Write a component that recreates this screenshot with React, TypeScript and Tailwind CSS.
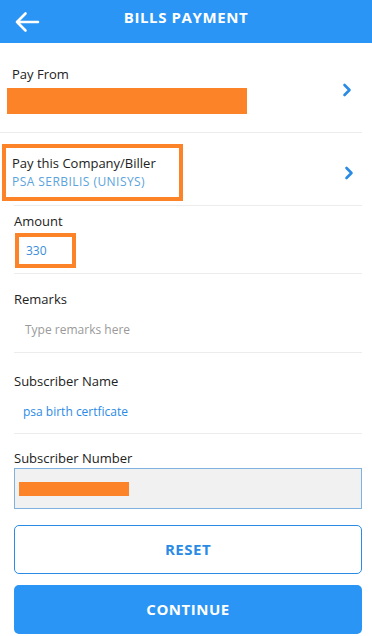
import React from "react";

const font = { fontFamily: '"Open Sans", "Liberation Sans", sans-serif' };

function Chevron() {
  return (
    <svg width="10" height="14" viewBox="0 0 10 14" className="shrink-0">
      <path d="M2.5 2 L7.5 7 L2.5 12" fill="none" stroke="#2a8be6" strokeWidth="2.6" strokeLinecap="round" strokeLinejoin="round" />
    </svg>
  );
}

export default function App() {
  return (
    <div className="w-[372px] h-[636px] bg-white overflow-hidden flex flex-col" style={font}>
      <div className="h-[43px] shrink-0 bg-[#2a95f5] flex items-center px-[14px] relative">
        <svg width="26" height="22" viewBox="0 0 26 22">
          <path d="M24 11 H3 M11.5 2.5 L3 11 L11.5 19.5" fill="none" stroke="#fff" strokeWidth="2.6" strokeLinecap="round" strokeLinejoin="round" />
        </svg>
        <div className="absolute left-0 right-0 top-0 h-[35px] flex items-center justify-center text-white font-bold text-[15px] tracking-[0.6px] pointer-events-none">BILLS PAYMENT</div>
      </div>

      <div className="flex items-center pl-[7px] pr-[18px] pt-[22px] pb-[18px] border-b border-[#ececec] mr-[10px]">
        <div className="flex-1 flex flex-col">
          <div className="text-[13px] text-[#222] pl-[5px] leading-[18px]">Pay From</div>
          <div className="mt-[5px] w-[240px] h-[26px] bg-[#fd8329]" />
        </div>
        <div className="-mr-[8px]"><Chevron /></div>
      </div>

      <div className="flex items-center pr-[18px] pt-[11px] pb-[4px] ml-[2px]">
        <div className="flex-1">
          <div className="w-[181px] border-[4px] border-[#fd8329] pl-[6px] pt-[6px] pb-[6px]">
            <div className="text-[13px] text-[#222] leading-[18px]">Pay this Company/Biller</div>
            <div className="text-[12px] text-[#5aa3dc] leading-[18px] mt-[1px] tracking-[0.45px]">PSA SERBILIS (UNISYS)</div>
          </div>
        </div>
        <Chevron />
      </div>

      <div className="ml-[14px] mr-[10px] border-t border-[#ececec]" />

      <div className="ml-[14px] mr-[10px] pt-[6px] pb-[5px] border-b border-[#ececec]">
        <div className="text-[13px] text-[#222] leading-[18px]">Amount</div>
        <div className="mt-[3px] ml-[1px] w-[61px] h-[35px] border-[4px] border-[#fd8329] flex items-center pl-[7px] text-[12px] text-[#3a8ddb]">330</div>
      </div>

      <div className="ml-[14px] mr-[10px] pt-[16px] pb-[14px] border-b border-[#ececec]">
        <div className="text-[13px] text-[#222] leading-[18px]">Remarks</div>
        <div className="mt-[14px] pl-[11px] text-[12px] text-[#9a9a9a] leading-[16px]">Type remarks here</div>
      </div>

      <div className="ml-[14px] mr-[10px] pt-[19px] pb-[13px] border-b border-[#ececec]">
        <div className="text-[13px] text-[#222] leading-[18px]">Subscriber Name</div>
        <div className="mt-[14px] pl-[9px] text-[12px] text-[#2a8be6] leading-[16px]">psa birth certficate</div>
      </div>

      <div className="ml-[14px] mr-[10px] pt-[15px]">
        <div className="text-[13px] text-[#222] leading-[18px]">Subscriber Number</div>
        <div className="mt-[1px] h-[41px] bg-[#f1f1f1] border border-[#7fb2e0] flex items-center pl-[4px]">
          <div className="w-[110px] h-[14px] bg-[#fd8329]" />
        </div>
      </div>

      <div className="ml-[14px] mr-[10px] mt-[16px] h-[49px] shrink-0 rounded-[5px] border border-[#2a8be6] flex items-center justify-center text-[#2a8be6] font-bold text-[15px] tracking-[0.5px]">RESET</div>
      <div className="ml-[14px] mr-[10px] mt-[11px] h-[49px] shrink-0 rounded-[5px] bg-[#2a95f5] flex items-center justify-center text-white font-bold text-[15px] tracking-[0.5px]">CONTINUE</div>
    </div>
  );
}
